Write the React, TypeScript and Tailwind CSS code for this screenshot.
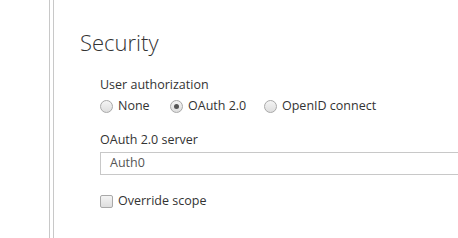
import React from 'react';

function Radio({ checked }: { checked?: boolean }) {
  return (
    <span className="w-[13px] h-[13px] rounded-full border border-[#a9a9a9] bg-gradient-to-b from-[#f4f4f4] to-[#dedede] flex items-center justify-center shrink-0">
      {checked && <span className="w-[5px] h-[5px] rounded-full bg-[#555]" />}
    </span>
  );
}

export default function App() {
  const options = [
    { label: 'None', checked: false, w: 'w-[70px]' },
    { label: 'OAuth 2.0', checked: true, w: 'w-[94px]' },
    { label: 'OpenID connect', checked: false, w: '' },
  ];

  return (
    <div
      className="h-[238px] w-[458px] bg-white flex overflow-hidden text-[#333]"
      style={{ fontFamily: '"Segoe UI", "Open Sans", "Noto Sans", sans-serif' }}
    >
      <div className="w-[49px] shrink-0" />
      <div className="w-[4px] shrink-0 border-l border-[#c8c8c8]" />
      <div className="flex-1 border-l border-[#c8c8c8] pl-[26px] pt-[27px]">
        {/* Heading */}
        <h1 className="text-[22px] leading-[30px] font-light text-[#333]">Security</h1>

        <div className="pl-[20px] mt-[19px] text-[12.5px]">
          <div className="leading-[17px]">User authorization</div>
          <div className="flex items-center mt-[4px] h-[18px]">
            {options.map((o) => (
              <label key={o.label} className={`flex items-center gap-[5px] ${o.w}`}>
                <Radio checked={o.checked} />
                <span>{o.label}</span>
              </label>
            ))}
          </div>

          <div className="leading-[17px] mt-[16px]">OAuth 2.0 server</div>
          <div className="mt-[4px] -mr-[10px] h-[23px] border border-[#c8c8c8] flex items-center pl-[9px] text-[#555]">
            Auth0
          </div>

          <label className="flex items-center gap-[5px] mt-[17px] h-[18px]">
            <span className="w-[13px] h-[13px] rounded-[2px] border border-[#a9a9a9] bg-gradient-to-b from-[#f4f4f4] to-[#dedede] shrink-0" />
            <span>Override scope</span>
          </label>
        </div>
      </div>
    </div>
  );
}
